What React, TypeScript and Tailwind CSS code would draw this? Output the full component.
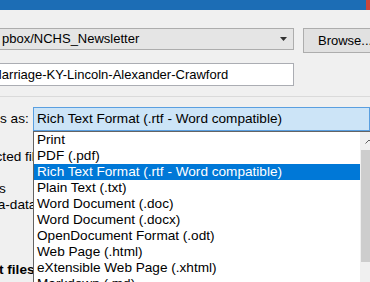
import React from 'react';

const formats = [
    'Print',
    'PDF (.pdf)',
    'Rich Text Format (.rtf - Word compatible)',
    'Plain Text (.txt)',
    'Word Document (.doc)',
    'Word Document (.docx)',
    'OpenDocument Format (.odt)',
    'Web Page (.html)',
    'eXtensible Web Page (.xhtml)',
    'Markdown (.md)',
];

export default function App() {
    const selected = 2;

    return (
        <div className="w-[370px] h-[282px] overflow-hidden relative bg-[#f0f0f0] text-black text-[14px] leading-[16px] font-['Liberation_Sans',Arial,sans-serif]">
            {/* title bar */}
            <div className="h-[10px] bg-[#1c6db5] flex justify-end">
                <div className="w-[4px] bg-[#c9463d]" />
            </div>

            {/* folder row */}
            <div className="mt-[18px] flex items-start text-[13px]">
                <div className="-ml-[4px] w-[298px] h-[22px] shrink-0 border border-[#adadad] bg-[#e5e5e5] flex items-center">
                    <span className="pl-[5px] flex-1 whitespace-nowrap">pbox/NCHS_Newsletter</span>
                    <svg className="w-[7px] h-[4px] mr-[6px]" viewBox="0 0 7 4">
                        <path d="M0 0h7L3.5 4z" fill="#333" />
                    </svg>
                </div>
                <div className="ml-[9px] w-[80px] h-[25px] shrink-0 border border-[#adadad] bg-[#e1e1e1] flex items-center pl-[14px] whitespace-nowrap">
                    Browse...
                </div>
            </div>

            {/* file name */}
            <div className="mt-[10px] -ml-[4px] w-[298px] h-[23px] border border-[#abadb3] bg-white flex items-center overflow-hidden text-[13px]">
                <span className="-ml-[6px] whitespace-nowrap">Marriage-KY-Lincoln-Alexander-Crawford</span>
            </div>

            <div className="mt-[10px] border-t border-[#dadada]" />

            {/* format section */}
            <div className="relative pt-[10px] text-[13.6px]">
                <div className="flex items-stretch h-[24px]">
                    <div className="w-[33px] shrink-0 flex items-center whitespace-nowrap">s as:</div>
                    <div className="flex-1 border border-[#5a9fe0] bg-[#cce4f7] flex items-center pl-[3px] whitespace-nowrap">
                        {formats[selected]}
                    </div>
                </div>

                <div className="mt-[18px] whitespace-nowrap -ml-[12px]">ected files</div>
                <div className="mt-[16px] whitespace-nowrap -ml-[1px]">s</div>
                <div className="whitespace-nowrap -ml-[6px]">ta-data</div>
                <div className="mt-[49px] whitespace-nowrap font-bold -ml-[1px]">t files:</div>

                {/* open dropdown list */}
                <div className="absolute left-[33px] top-[34px] w-[345px] h-[160px] bg-white border border-[#646464] flex">
                    <div className="w-[326px] flex flex-col">
                        {formats.map((f, i) => (
                            <div
                                key={f}
                                className={
                                    i === selected
                                        ? 'h-[16px] shrink-0 pl-[3px] whitespace-nowrap bg-[#0078d7] text-white'
                                        : 'h-[16px] shrink-0 pl-[3px] whitespace-nowrap'
                                }
                            >
                                {f}
                            </div>
                        ))}
                    </div>
                    <div className="w-[17px] bg-[#f0f0f0] flex flex-col">
                        <div className="h-[18px] flex items-center justify-center">
                            <svg className="w-[8px] h-[5px]" viewBox="0 0 8 5">
                                <path d="M0.5 4.5L4 1l3.5 3.5" stroke="#606060" fill="none" />
                            </svg>
                        </div>
                        <div className="h-[112px] mx-[1px] bg-[#cdcdcd]" />
                    </div>
                </div>
            </div>
        </div>
    );
}
